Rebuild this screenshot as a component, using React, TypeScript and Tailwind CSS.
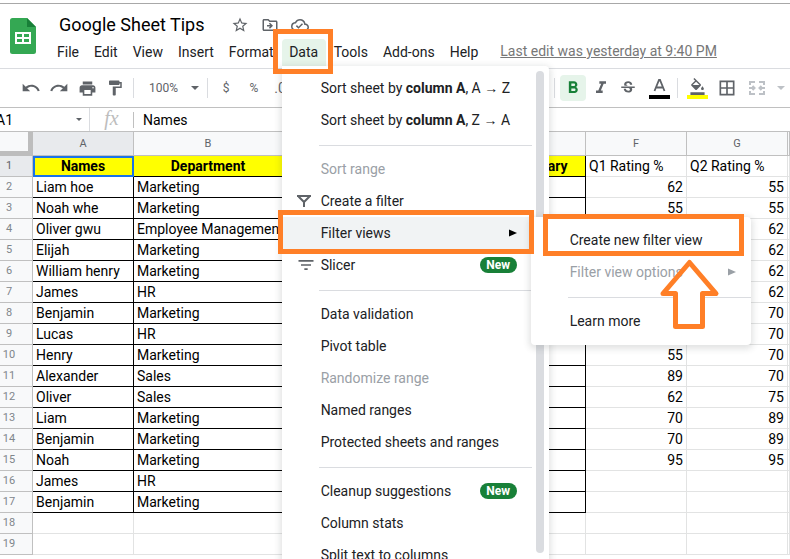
import React from 'react';
import {
    MdUndo, MdRedo, MdPrint, MdFormatPaint, MdStarBorder, MdOutlineDriveFileMove, MdOutlineCloudDone,
    MdFormatBold, MdFormatItalic, MdStrikethroughS, MdFormatColorFill, MdBorderAll, MdFilterList,
} from 'react-icons/md';

const people = [
    ['Liam hoe', 'Marketing', '62', '55'],
    ['Noah whe', 'Marketing', '55', '55'],
    ['Oliver gwu', 'Employee Management', '62', '62'],
    ['Elijah', 'Marketing', '62', '62'],
    ['William henry', 'Marketing', '70', '62'],
    ['James', 'HR', '70', '62'],
    ['Benjamin', 'Marketing', '62', '70'],
    ['Lucas', 'HR', '62', '70'],
    ['Henry', 'Marketing', '55', '70'],
    ['Alexander', 'Sales', '89', '70'],
    ['Oliver', 'Sales', '62', '75'],
    ['Liam', 'Marketing', '70', '89'],
    ['Benjamin', 'Marketing', '70', '89'],
    ['Noah', 'Marketing', '95', '95'],
    ['James', 'HR', '', ''],
    ['Benjamin', 'Marketing', '', ''],
];

const Caret = ({ className = 'w-2 h-1' }: { className?: string }) => (
    <svg viewBox="0 0 8 4" className={`fill-current ${className}`} aria-hidden="true">
        <path d="M0 0h8L4 4z" />
    </svg>
);

const Arrow = () => (
    <svg viewBox="0 0 8 8" className="w-2 h-2 fill-current" aria-hidden="true">
        <path d="M0 .5l8 3.500-8 3.500z" />
    </svg>
);

const Divider = () => <span className="w-px h-5 bg-[#dadce0] shrink-0" />;

const Tool = ({ label, className = 'w-7', children }: { label: string; className?: string; children: React.ReactNode }) => (
    <button aria-label={label} className={`h-[26px] shrink-0 flex items-center justify-center rounded-sm ${className}`}>
        {children}
    </button>
);

const Item = ({ icon, end, disabled, active, children }: {
    icon?: React.ReactNode; end?: React.ReactNode; disabled?: boolean; active?: boolean; children: React.ReactNode;
}) => (
    <button
        role="menuitem"
        disabled={disabled}
        className={`w-full h-8 pr-[15px] flex items-center text-left whitespace-nowrap ${active ? 'bg-[#f1f3f4]' : ''} ${disabled ? 'text-[#9aa0a6]' : 'text-[#202124]'}`}
    >
        <span className="w-[39px] pl-3.5 shrink-0 text-[#5f6368]">{icon}</span>
        <span className="grow">{children}</span>
        {end}
    </button>
);

const Separator = () => <div role="separator" className="ml-[37px] mt-[9px] mb-[7px] h-px bg-[#dadce0]" />;

const NewBadge = () => (
    <span className="h-4 w-[37px] rounded-full bg-[#188038] text-white text-xs leading-4 font-bold text-center">New</span>
);

const FilterSubmenu = () => (
    <div role="menu" className="absolute left-full top-0 -ml-px w-[220px] pt-[7px] pb-2 bg-white rounded shadow-[0_2px_6px_2px_rgba(60,64,67,0.15)] z-10">
        <div className="relative">
            <Item>Create new filter view</Item>
            <span className="absolute -top-2.5 left-3 w-[201px] h-[42px] border-5 border-[#ff7f27]" />
        </div>
        <Item disabled end={<Arrow />}>Filter view options</Item>
        <Separator />
        <Item>Learn more</Item>
        <svg viewBox="0 0 61 72" className="absolute left-32 top-[41px] w-[61px] h-[72px]" aria-hidden="true">
            <path d="M16 34h27v34H16z" fill="#fff" />
            <path d="M30.500 4.500L57 35.500H43.500V68.500H16.500V35.500H4Z" fill="none" stroke="#ff7f27" strokeWidth="5" strokeLinejoin="round" />
        </svg>
    </div>
);

const DataMenu = () => (
    <div role="menu" className="absolute left-0 top-full w-[267px] pt-1.5 pb-4 pr-[17px] bg-white rounded-b rounded-tr shadow-[0_2px_6px_2px_rgba(60,64,67,0.15)] z-10">
        <Item>Sort sheet by <b className="font-bold">column A</b>, A → Z</Item>
        <Item>Sort sheet by <b className="font-bold">column A</b>, Z → A</Item>
        <Separator />
        <Item disabled>Sort range</Item>
        <Item icon={
            <svg viewBox="0 0 16 14" className="w-4 h-3.5" fill="none" stroke="currentColor" strokeWidth="2" aria-hidden="true">
                <path d="M1 2h14M2.500 2.500L8 8l5.500-5.500M8 7v6" />
            </svg>
        }>Create a filter</Item>
        <div className="relative">
            <Item active end={<span className="text-black"><Arrow /></span>}>Filter views</Item>
            <FilterSubmenu />
            <span className="absolute -left-1 -top-[7px] w-64 h-11 border-5 border-[#ff7f27] z-20" />
        </div>
        <Item icon={<MdFilterList size={20} />} end={<NewBadge />}>Slicer</Item>
        <Separator />
        <Item>Data validation</Item>
        <Item>Pivot table</Item>
        <Item disabled>Randomize range</Item>
        <Item>Named ranges</Item>
        <Item>Protected sheets and ranges</Item>
        <Separator />
        <Item end={<NewBadge />}>Cleanup suggestions</Item>
        <Item>Column stats</Item>
        <Item>Split text to columns</Item>
        <span className="absolute right-[5px] top-[5px] w-2 h-[482px] rounded-full bg-[#dadce0]" />
    </div>
);

const Header = () => (
    <header className="flex gap-3.5 pl-2.5 h-[65px] border-t border-[#a8a8a8]">
        <svg viewBox="0 0 26 36" className="w-[26px] h-9 mt-3.5 shrink-0" aria-hidden="true">
            <path d="M2.500 0H17l9 9v24.500a2.500 2.500 0 0 1-2.500 2.500h-21A2.500 2.500 0 0 1 0 33.500v-31A2.500 2.500 0 0 1 2.500 0z" fill="#34a853" />
            <path d="M17 0l9 9h-9z" fill="#188038" />
            <path d="M5 14h16v12H5zM7 16v3h5v-3zM14 16v3h5v-3zM7 21v3h5v-3zM14 21v3h5v-3z" fill="#fff" fillRule="evenodd" />
        </svg>
        <div className="pt-2">
            <div className="flex items-center h-[27px] pb-0.5 pl-2 text-[#5f6368]">
                <h1 className="w-[173px] pl-px text-lg leading-6 text-black whitespace-nowrap">Google Sheet Tips</h1>
                <button aria-label="Star"><MdStarBorder size={18} /></button>
                <button aria-label="Move" className="ml-3"><MdOutlineDriveFileMove size={18} /></button>
                <button aria-label="See document status" className="ml-3"><MdOutlineCloudDone size={18} /></button>
            </div>
            <nav className="flex gap-px text-[#202124] whitespace-nowrap">
                {['File', 'Edit', 'View', 'Insert', 'Format'].map((name) => (
                    <button key={name} className="h-[27px] px-[7px] pb-0.5">{name}</button>
                ))}
                <div className="relative">
                    <button className="w-11 h-[27px] px-[7px] pb-0.5 bg-[#e6f4ea] rounded-t">Data</button>
                    <DataMenu />
                    <span className="absolute -left-[9px] -top-2.5 w-[60px] h-[45px] border-5 border-[#ff7f27] z-20" />
                </div>
                {['Tools', 'Add-ons', 'Help'].map((name) => (
                    <button key={name} className="h-[27px] px-[7px] pb-0.5">{name}</button>
                ))}
                <a href="#history" className="ml-3.5 leading-6 text-[#777] underline">Last edit was yesterday at 9:40 PM</a>
            </nav>
        </div>
    </header>
);

const Toolbar = () => (
    <div className="flex items-center h-[39px] pl-[17px] border-t border-[#dadce0] text-xs text-[#5f6368] whitespace-nowrap">
        <Tool label="Undo"><MdUndo size={20} /></Tool>
        <Tool label="Redo"><MdRedo size={20} /></Tool>
        <Tool label="Print"><MdPrint size={19} /></Tool>
        <Tool label="Paint format" className="w-7 mr-1"><MdFormatPaint size={18} /></Tool>
        <Divider />
        <label className="relative w-[73px] shrink-0 flex items-center">
            <select aria-label="Zoom" defaultValue="100%" className="appearance-none w-full pl-[15px] outline-none">
                <option>100%</option>
                <option>75%</option>
            </select>
            <Caret className="absolute right-2 w-2 h-1" />
        </label>
        <Divider />
        <Tool label="Currency" className="w-7 ml-1">$</Tool>
        <Tool label="Percent">%</Tool>
        <Tool label="Decrease decimal places" className="w-6 text-sm">.0</Tool>
        <Tool label="Increase decimal places" className="w-8 text-sm">.00</Tool>
        <Tool label="More formats" className="w-12">123</Tool>
        <Divider />
        <Tool label="Font" className="w-[105px]">Default (Ari…)</Tool>
        <Divider />
        <Tool label="Font size" className="w-[75px]">10</Tool>
        <Divider />
        <Tool label="Bold" className="w-[26px] mx-[5px] bg-[#e6f4ea] text-[#188038]"><MdFormatBold size={20} /></Tool>
        <Tool label="Italic" className="w-5"><MdFormatItalic size={20} /></Tool>
        <Tool label="Strikethrough" className="w-[34px]"><MdStrikethroughS size={18} /></Tool>
        <Tool label="Text color">
            <svg viewBox="0 0 21 21" className="w-[21px] h-[21px]" aria-hidden="true">
                <path d="M5.500 13L10 2h1l4.500 11M7.500 9.500h6" fill="none" stroke="currentColor" strokeWidth="1.800" />
                <path d="M0 17h21v4H0z" fill="#000" />
            </svg>
        </Tool>
        <span className="w-1" />
        <Divider />
        <Tool label="Fill color" className="w-[39px]">
            <span className="flex flex-col items-center">
                <MdFormatColorFill size={19} className="h-[17px]" />
                <span className="w-[21px] h-1 bg-[#ff0]" />
            </span>
        </Tool>
        <Tool label="Borders" className="w-5"><MdBorderAll size={20} /></Tool>
        <Tool label="Merge cells" className="w-10 text-[#bdc1c6]">
            <svg viewBox="0 0 16 14" className="w-4 h-3.5" fill="none" stroke="currentColor" strokeWidth="2" aria-hidden="true">
                <path d="M1 4V1h5M10 1h5v3M1 10v3h5M10 13h5v-3M0 7h5M11 7h5M3.500 5l2 2-2 2M12.500 5l-2 2 2 2" />
            </svg>
        </Tool>
        <Caret className="w-2 h-1 text-[#bdc1c6]" />
    </div>
);

const FormulaBar = () => (
    <div className="flex items-center h-[25px] border-y border-[#c0c0c0] text-black">
        <input aria-label="Name box" defaultValue="A1" className="w-20 -ml-1 outline-none" />
        <Caret className="w-1.5 h-[3px] text-[#5f6368] mr-[7px]" />
        <span className="w-px h-full bg-[#dadce0]" />
        <label htmlFor="formula" className="w-[43px] pb-1 text-center font-['Liberation_Serif',serif] italic text-xl leading-5 text-[#bdbdbd]">fx</label>
        <span className="w-px h-4 bg-[#c0c0c0]" />
        <input id="formula" defaultValue="Names" className="grow min-w-0 pl-[9px] outline-none" />
    </div>
);

const boxed = 'border-r border-b border-black px-[3px] py-0 whitespace-nowrap';
const plain = 'border-r border-b border-[#e2e3e3] px-[3px] py-0 text-right';
const rowHead = 'h-[21px] border-r border-b border-[#c0c0c0] p-0 pr-3.5 text-[11px] leading-5 font-normal text-center';

const Sheet = () => (
    <table className="w-full table-fixed border-separate border-spacing-0 text-black leading-5">
        <colgroup>
            <col className="w-[33px]" />
            <col className="w-[101px]" />
            <col className="w-[149px]" />
            <col className="w-[101px]" />
            <col className="w-[101px]" />
            <col className="w-[101px]" />
            <col className="w-[101px]" />
            <col className="w-[101px]" />
            <col />
        </colgroup>
        <thead>
            <tr className="h-6 text-[11px] text-[#5f6368]">
                <td className="h-6 p-0 bg-[#f8f9fa] border-r-5 border-b-5 border-[#bdbdbd]" />
                {['A', 'B', 'C', 'D', 'E', 'F', 'G', ''].map((name) => (
                    <th key={name} className={`p-0 font-normal border-r border-b border-[#c0c0c0] ${name === 'A' ? 'bg-[#e8eaed]' : 'bg-[#f8f9fa]'}`}>{name}</th>
                ))}
            </tr>
        </thead>
        <tbody>
            <tr>
                <th className={`${rowHead} bg-[#e8eaed] text-[#5f6368]`}>1</th>
                {['Names', 'Department', 'Position', 'Location', 'Net Salary'].map((name) => (
                    <td key={name} className={`${boxed} relative bg-[#ff0] font-bold text-center`}>
                        {name}
                        {name === 'Names' && <span className="absolute top-0 left-0 -right-px -bottom-px border-2 border-[#1a73e8]" />}
                    </td>
                ))}
                <td className="border-r border-b border-[#e2e3e3] px-[3px] py-0">Q1 Rating %</td>
                <td className="border-r border-b border-[#e2e3e3] px-[3px] py-0">Q2 Rating %</td>
                <td className={plain} />
            </tr>
            {people.map(([name, department, q1, q2], i) => (
                <tr key={i}>
                    <th className={`${rowHead} bg-[#f8f9fa] text-[#80868b]`}>{i + 2}</th>
                    <td className={boxed}>{name}</td>
                    <td className={boxed}>{department}</td>
                    <td className={boxed} />
                    <td className={boxed} />
                    <td className={boxed} />
                    <td className={plain}>{q1}</td>
                    <td className={plain}>{q2}</td>
                    <td className={plain} />
                </tr>
            ))}
            {[18, 19].map((n) => (
                <tr key={n}>
                    <th className={`${rowHead} bg-[#f8f9fa] text-[#80868b]`}>{n}</th>
                    {[1, 2, 3, 4, 5, 6, 7, 8].map((c) => <td key={c} className={plain} />)}
                </tr>
            ))}
        </tbody>
    </table>
);

const App: React.FC = () => {
    return (
        <div className="h-screen overflow-hidden bg-white pt-[3px] font-[Roboto,'Liberation_Sans',sans-serif] text-sm">
            <Header />
            <Toolbar />
            <FormulaBar />
            <Sheet />
        </div>
    );
};

export default App;
